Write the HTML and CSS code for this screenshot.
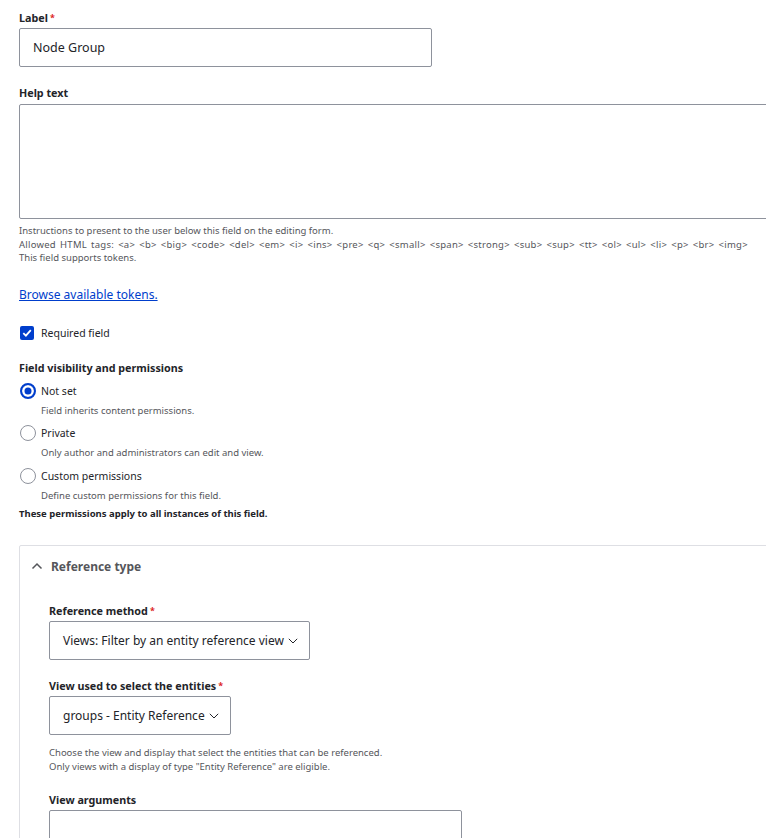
FILE: index.html
```html
<!DOCTYPE html>
<html>
<head>
<meta charset="utf-8">
<link rel="stylesheet" href="styles.css">
</head>
<body>
<form class="form">
  <div class="field field--label">
    <div class="label">Label<span class="req">*</span></div>
    <div class="input input--label">Node Group</div>
  </div>

  <div class="field field--help">
    <div class="label">Help text</div>
    <div class="textarea"></div>
    <div class="desc desc--help">
      <div>Instructions to present to the user below this field on the editing form.</div>
      <div class="tags">Allowed HTML tags: &lt;a&gt; &lt;b&gt; &lt;big&gt; &lt;code&gt; &lt;del&gt; &lt;em&gt; &lt;i&gt; &lt;ins&gt; &lt;pre&gt; &lt;q&gt; &lt;small&gt; &lt;span&gt; &lt;strong&gt; &lt;sub&gt; &lt;sup&gt; &lt;tt&gt; &lt;ol&gt; &lt;ul&gt; &lt;li&gt; &lt;p&gt; &lt;br&gt; &lt;img&gt;</div>
      <div>This field supports tokens.</div>
    </div>
  </div>

  <a class="link" href="#">Browse available tokens.</a>

  <div class="check">
    <span class="checkbox"><svg width="14" height="14" viewBox="0 0 14 14"><path d="M3.3 7.2 L5.9 9.7 L10.8 4.2" fill="none" stroke="#fff" stroke-width="1.8"/></svg></span>
    <span class="option-text">Required field</span>
  </div>

  <div class="radios">
    <div class="label">Field visibility and permissions</div>
    <div class="radio-item">
      <div class="radio-row"><span class="radio radio--on"></span><span class="option-text">Not set</span></div>
      <div class="desc radio-desc">Field inherits content permissions.</div>
    </div>
    <div class="radio-item">
      <div class="radio-row"><span class="radio"></span><span class="option-text">Private</span></div>
      <div class="desc radio-desc">Only author and administrators can edit and view.</div>
    </div>
    <div class="radio-item">
      <div class="radio-row"><span class="radio"></span><span class="option-text">Custom permissions</span></div>
      <div class="desc radio-desc">Define custom permissions for this field.</div>
    </div>
    <div class="note">These permissions apply to all instances of this field.</div>
  </div>

  <div class="details">
    <div class="summary">
      <svg class="summary-icon" width="12" height="8" viewBox="0 0 12 8"><path d="M1.5 6.5 L6 2 L10.5 6.5" fill="none" stroke="#55565b" stroke-width="1.5"/></svg>
      <span>Reference type</span>
    </div>
    <div class="details-body">
      <div class="field">
        <div class="label">Reference method<span class="req">*</span></div>
        <div class="select select--method"><span>Views: Filter by an entity reference view</span><svg class="chev" width="10" height="6" viewBox="0 0 10 6"><path d="M0.8 0.8 L5 5 L9.2 0.8" fill="none" stroke="#232429" stroke-width="1"/></svg></div>
      </div>
      <div class="field field--view">
        <div class="label">View used to select the entities<span class="req">*</span></div>
        <div class="select select--view"><span>groups - Entity Reference</span><svg class="chev" width="10" height="6" viewBox="0 0 10 6"><path d="M0.8 0.8 L5 5 L9.2 0.8" fill="none" stroke="#232429" stroke-width="1"/></svg></div>
        <div class="desc desc--view">
          <div>Choose the view and display that select the entities that can be referenced.</div>
          <div>Only views with a display of type "Entity Reference" are eligible.</div>
        </div>
      </div>
      <div class="field field--args">
        <div class="label">View arguments</div>
        <div class="input input--args"></div>
      </div>
    </div>
  </div>
</form>
</body>
</html>
```

FILE: styles.css
```css
html, body {
  margin: 0;
  padding: 0;
  background: #fff;
  overflow: hidden;
}
body {
  width: 766px;
  height: 838px;
}
.form {
  padding: 10px 0 0 19px;
  width: 800px;
  font-family: "Noto Sans", "Open Sans", sans-serif;
  color: #232429;
}
.label {
  font-size: 10.75px;
  font-weight: 700;
  line-height: 16px;
  color: #232429;
}
.req {
  color: #dc2323;
  margin-left: 2px;
  font-size: 9px;
  vertical-align: top;
}
.field--label .label {
  margin-bottom: 2px;
}
.input, .select, .textarea {
  box-sizing: border-box;
  border: 1px solid #8e929c;
  border-radius: 2px;
  background: #fff;
}
.input--label {
  width: 413px;
  height: 39px;
  padding: 0 13px;
  font-size: 12.5px;
  line-height: 37px;
  color: #232429;
}
.field--help {
  margin-top: 18px;
}
.field--help .label {
  margin-bottom: 3px;
}
.textarea {
  width: 790px;
  height: 115px;
  border-radius: 2px 0 0 2px;
}
.desc {
  font-size: 9.5px;
  line-height: 13.5px;
  color: #55565b;
}
.desc--help {
  margin-top: 5px;
}
.tags {
  word-spacing: 1.4px;
  letter-spacing: 0.25px;
  white-space: nowrap;
}
.link {
  display: inline-block;
  margin-top: 22px;
  font-size: 12px;
  line-height: 16px;
  color: #003ecc;
  text-decoration: underline;
}
.check {
  display: flex;
  align-items: center;
  margin-top: 21px;
  height: 16px;
}
.checkbox {
  display: inline-block;
  width: 14px;
  height: 14px;
  margin-left: 1px;
  background: #003ecc;
  border-radius: 2px;
}
.checkbox svg {
  display: block;
}
.option-text {
  font-size: 10.5px;
  line-height: 16px;
  margin-left: 7px;
  color: #232429;
}
.radios {
  margin-top: 19px;
}
.radios > .label {
  margin-bottom: 6px;
}
.radio-row {
  display: flex;
  align-items: center;
  height: 18px;
}
.radio {
  box-sizing: border-box;
  display: inline-block;
  width: 16px;
  height: 16px;
  border: 1px solid #8e929c;
  border-radius: 50%;
  background: #fff;
  margin-left: 1px;
}
.radio--on {
  border: 2px solid #003ecc;
  box-shadow: inset 0 0 0 2.5px #fff, inset 0 0 0 8px #003ecc;
}
.radio-row .option-text {
  margin-left: 5px;
}
.radio-desc {
  padding-left: 22px;
  margin-top: 4px;
  margin-bottom: 7px;
}
.note {
  font-size: 9.5px;
  font-weight: 700;
  line-height: 12px;
  color: #232429;
  margin-top: -1px;
}
.details {
  margin-top: 25px;
  width: 790px;
  height: 400px;
  border: 1px solid #dedfe4;
  border-radius: 2px;
  box-sizing: border-box;
}
.summary {
  display: flex;
  align-items: center;
  height: 40px;
  padding-left: 11px;
  font-size: 12px;
  font-weight: 700;
  color: #55565b;
}
.summary-icon {
  margin-right: 8px;
}
.details-body {
  padding: 17px 0 0 29px;
}
.details-body .label {
  margin-bottom: 2px;
}
.select {
  display: flex;
  align-items: center;
  height: 39px;
  padding: 0 11px 0 13px;
  font-size: 12px;
  color: #232429;
  white-space: nowrap;
}
.select span {
  flex: 1;
}
.chev {
  margin-left: 2px;
}
.select--method {
  width: 261px;
}
.select--view {
  width: 182px;
}
.field--view {
  margin-top: 18px;
}
.desc--view {
  margin-top: 11px;
  line-height: 14px;
}
.field--args {
  margin-top: 18px;
}
.input--args {
  width: 413px;
  height: 40px;
}
```
